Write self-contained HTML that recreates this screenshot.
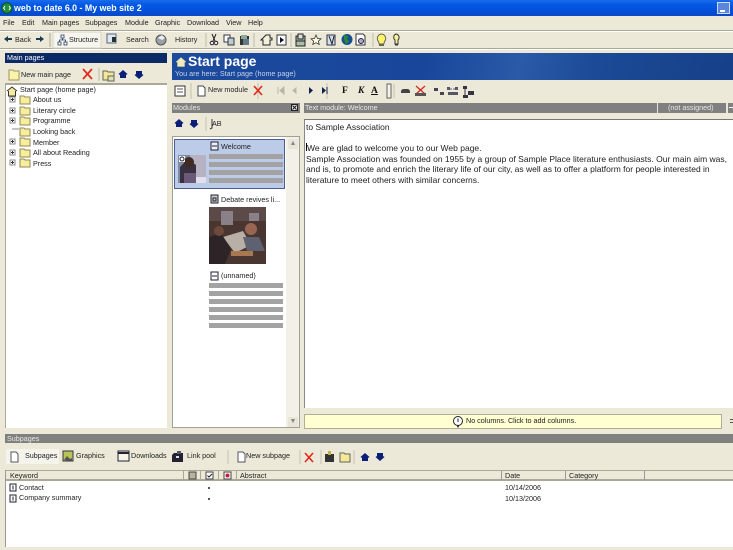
<!DOCTYPE html>
<html><head><meta charset="utf-8"><style>
html,body{margin:0;padding:0}
body{width:733px;height:550px;overflow:hidden;background:#ece9d8;position:relative}
#w{position:absolute;left:0;top:0;width:733px;height:550px;overflow:hidden;background:#ece9d8;font-family:"Liberation Sans",sans-serif;font-size:7.2px;color:#222;filter:blur(.3px)}
.a,.t,svg{position:absolute}
.t{white-space:nowrap;line-height:10px}
.g{background:#a3a3a3;position:absolute;height:5px}
</style></head><body><div id="w">
<div class="a" style="left:0;top:0;width:733px;height:16px;background:linear-gradient(#1a6cec,#0458e4 30%,#0350d8 70%,#0a48c8)"></div>
<svg style="left:1px;top:2px" width="12" height="12"><circle cx="6" cy="6" r="5.2" fill="#1f8f3a" stroke="#0c4d2a"/><path d="M4 4 2.600 6 4 8M8 4l1.400 2L8 8" stroke="#fff" fill="none"/></svg>
<div class="t" style="left:14px;top:3px;color:#fff;font-weight:bold;font-size:8.8px">web to date 6.0 - My web site 2</div>
<div class="a" style="left:717px;top:2px;width:13px;height:12px;background:#5a86e0;border:1px solid #d0dcf5;box-sizing:border-box"></div>
<div class="a" style="left:720px;top:10px;width:5px;height:2px;background:#fff"></div>
<div class="t" style="left:3px;top:18px">File</div><div class="t" style="left:22px;top:18px">Edit</div><div class="t" style="left:42px;top:18px">Main pages</div><div class="t" style="left:85px;top:18px">Subpages</div><div class="t" style="left:125px;top:18px">Module</div><div class="t" style="left:155px;top:18px">Graphic</div><div class="t" style="left:187px;top:18px">Download</div><div class="t" style="left:226px;top:18px">View</div><div class="t" style="left:248px;top:18px">Help</div>
<div class="a" style="left:0;top:30px;width:733px;height:1px;background:#aaa897"></div>
<div class="a" style="left:0;top:31px;width:733px;height:1px;background:#fff"></div>
<div class="a" style="left:0;top:48px;width:733px;height:1px;background:#aca899"></div>
<div class="a" style="left:0;top:49px;width:733px;height:1px;background:#fff"></div>
<svg style="left:0;top:31px" width="420" height="18">
<path d="M4 8 8 5v2h4v2H8v2zM44 8l-4-3v2h-4v2h4v2z" fill="#1b3a57"/>
<path d="M50 2v14" stroke="#aca899"/>
<rect x="53" y="1" width="48" height="16" fill="#f6f5ee" stroke="#d8d5c5"/>
<path d="M61 4h3v3h-3zM58 11h3v3h-3zM64 11h3v3h-3zM62.500 7v2M59.500 11V9h6v2" fill="#fff" stroke="#1d3a60" stroke-width=".8"/>
<rect x="107" y="3" width="9" height="9" fill="#dfe7f2" stroke="#56677f"/><path d="M112 6h4v5h-4z" fill="#233"/>
<circle cx="161" cy="9" r="5" fill="#9aa0a8" stroke="#555"/><path d="M158 7l4-3 3 3-3 2z" fill="#eee"/>
<path d="M206 2v14M254 2v14M291 2v14M373 2v14" stroke="#bdbaa8"/>
<path d="M212 3l3 7M216 3l-3 7" stroke="#222"/><circle cx="212" cy="12" r="1.800" fill="none" stroke="#223"/><circle cx="216" cy="12" r="1.800" fill="none" stroke="#223"/>
<rect x="224" y="4" width="6" height="7" fill="#fff" stroke="#334"/><rect x="228" y="7" width="6" height="7" fill="#bcc" stroke="#334"/>
<rect x="240" y="5" width="9" height="9" fill="#333"/><path d="M241 4h6v4h-6z" fill="#8a9"/><path d="M243 8h6v6h-6z" fill="#678"/>
<path d="M261 9l5-5h4v3h2v2h-2v5h-7V9z" fill="#f5f1d8" stroke="#223"/>
<rect x="277" y="4" width="9" height="10" fill="#fff" stroke="#334"/><path d="M280 6l4 3-4 3z" fill="#112"/>
<path d="M296 5h9v10h-9z" fill="#a9c0a8" stroke="#222"/><path d="M298 3h5v5h-5z" fill="#ddd" stroke="#222"/><path d="M296 10h9" stroke="#222"/>
<path d="M316 4l1.500 3.500 3.500.3-2.600 2.300.8 3.400-3.200-1.800-3.200 1.800.8-3.400-2.600-2.300 3.500-.3z" fill="#fffbe0" stroke="#333" stroke-width=".8"/>
<rect x="327" y="4" width="8" height="10" fill="#d8e0e8" stroke="#334"/><path d="M329 5l3 8 2-8" stroke="#123" fill="none"/>
<circle cx="347" cy="8.500" r="5.500" fill="#16508e"/><path d="M344 4l4 1-1 3 2 3-3 2-2-5z" fill="#2a8a35"/>
<path d="M356 3h7l2 2v9h-9z" fill="#fff" stroke="#334"/><circle cx="361" cy="10" r="2.500" fill="#aac" stroke="#223"/>
<path d="M379 13h5v2h-5z" fill="#665"/><path d="M381.500 3a4.500 4.500 0 0 1 3 7.500l-.7 2.500h-4.600l-.7-2.500a4.500 4.500 0 0 1 3-7.500z" fill="#fff46a" stroke="#665"/>
<path d="M396 3a3.500 3.500 0 0 1 2 6v4h-3V9a3.500 3.500 0 0 1 1-6z" fill="#f7f29b" stroke="#333"/><path d="M395 14h3" stroke="#333"/>
</svg>
<div class="t" style="left:15px;top:35px">Back</div><div class="t" style="left:69px;top:35px">Structure</div><div class="t" style="left:126px;top:35px">Search</div><div class="t" style="left:175px;top:35px">History</div>

<!-- left panel -->
<div class="a" style="left:5px;top:53px;width:162px;height:10px;background:#0c2a66"></div>
<div class="t" style="left:7px;top:53px;color:#fff">Main pages</div>
<svg style="left:5px;top:65px" width="140" height="18">
<path d="M4 5h4l1 1h5v9H4z" fill="#fbf3a8" stroke="#9a9464"/>
<path d="M78 4l9 10M87 4l-9 10" stroke="#e0281c" stroke-width="1.700"/>
<path d="M94 3v13" stroke="#bdbaa8"/>
<path d="M98 6h4l1 1h6v8H98z" fill="#f3e79a" stroke="#665"/><path d="M103 11h6v5h-6z" fill="#dbe0b0" stroke="#665"/>
<path d="M118 5l4.500 4-1.500 1v3h-6v-3l-1.500-1zM134 14l-4.500-4 1.500-1V6h6v3l1.500 1z" fill="#0c1f78"/>
</svg>
<div class="t" style="left:21px;top:70px">New main page</div>
<div class="a" style="left:5px;top:83px;width:162px;height:345px;background:#fff;border-top:2px solid #aca899;border-left:1px solid #aca899;box-sizing:border-box"></div>
<svg style="left:5px;top:85px" width="70" height="85">
<path d="M2 6l5-4 5 4M3.500 6v5h7V6" fill="#f6e9a0" stroke="#333"/>
<g fill="none" stroke="#888"><rect x="5" y="12" width="5" height="5" fill="#fff"/><rect x="5" y="23" width="5" height="5" fill="#fff"/><rect x="5" y="33" width="5" height="5" fill="#fff"/><path d="M7 44h7"/><rect x="5" y="54" width="5" height="5" fill="#fff"/><rect x="5" y="65" width="5" height="5" fill="#fff"/><rect x="5" y="75" width="5" height="5" fill="#fff"/></g>
<path d="M6 14.500h3M7.500 13v3M6 25.500h3M7.500 24v3M6 35.500h3M7.500 34v3M6 56.500h3M7.500 55v3M6 67.500h3M7.500 66v3M6 77.500h3M7.500 76v3" stroke="#333"/>
<g fill="#f7ed9c" stroke="#8f8a55"><path d="M15 11h4l1 1h5v7H15z"/><path d="M15 22h4l1 1h5v7H15z"/><path d="M15 32h4l1 1h5v7H15z"/><path d="M15 43h4l1 1h5v7H15z"/><path d="M15 53h4l1 1h5v7H15z"/><path d="M15 64h4l1 1h5v7H15z"/><path d="M15 74h4l1 1h5v7H15z"/></g>
</svg>
<div class="t" style="left:20px;top:85px">Start page (home page)</div>
<div class="t" style="left:33px;top:95px">About us</div>
<div class="t" style="left:33px;top:106px">Literary circle</div>
<div class="t" style="left:33px;top:116px">Programme</div>
<div class="t" style="left:33px;top:127px">Looking back</div>
<div class="t" style="left:33px;top:138px">Member</div>
<div class="t" style="left:33px;top:148px">All about Reading</div>
<div class="t" style="left:33px;top:159px">Press</div>

<!-- header -->
<div class="a" style="left:172px;top:53px;width:561px;height:27px;background:linear-gradient(100deg,#1c4a9c 0%,#19469a 45%,#2a5aa8 62%,#1c4a96 75%,#164088 100%)"></div>
<svg style="left:175px;top:56px" width="12" height="12"><path d="M1 6l5-4.500L11 6H9.500v4.500h-7V6z" fill="#f0e9c0" stroke="#e8d880" stroke-width=".5"/></svg>
<div class="t" style="left:188px;top:53px;color:#fff;font-weight:bold;font-size:14px;line-height:16px">Start page</div>
<div class="t" style="left:175px;top:69px;color:#c4d2ea">You are here: Start page (home page)</div>

<!-- module toolbar -->
<svg style="left:172px;top:81px" width="320" height="20">
<rect x="3" y="5" width="10" height="10" fill="#fff" stroke="#333"/><path d="M5 8h6M5 11h6" stroke="#555"/>
<path d="M19 2v16M86 2v16M155 2v16M216 2v16" stroke="#c4c1af"/>
<path d="M26 5h5l2 2v8h-7z" fill="#fff" stroke="#445"/>
<path d="M82 5l8 9M90 5l-8 9" stroke="#e0281c" stroke-width="1.600"/>
<path d="M106 6v7M112 6l-4 3.500 4 3.500zM124 7l-3 2.500 3 2.500z" fill="#b8b6a8" stroke="#b8b6a8"/>
<path d="M137 6l4 3.500-4 3.500zM150 6l4 3.500-4 3.500z" fill="#10204e"/><path d="M155 6v7" stroke="#10204e"/>
<rect x="215" y="3" width="4" height="14" fill="#f5f3e5" stroke="#666"/>
<path d="M222 3v14" stroke="#c4c1af"/>
<path d="M229 10a3 3 0 0 1 3-2h4a3 3 0 0 1 2 3v1h-9z" fill="#444"/>
<path d="M244 5l9 8M253 5l-9 8" stroke="#d8281c" stroke-width="1.300"/><path d="M243 12h11v3h-11z" fill="#555"/>
<path d="M262 7h4v3h-4zM268 11h4v3h-4z" fill="#445"/>
<path d="M275 6h3v3h-3zM283 6h3v3h-3zM276 11h10v3h-10z" fill="#556"/><path d="M275 8h11" stroke="#667" stroke-dasharray="2 1"/>
<path d="M291 5h4v3h-4zM296 10h6v4h-6zM291 14h5v3h-5z" fill="#334"/><path d="M293 8v6" stroke="#334"/>
</svg>
<div class="t" style="left:208px;top:85px">New module</div>
<div class="t" style="left:342px;top:86px;font-family:'Liberation Serif',serif;font-weight:bold;font-size:9.5px;color:#111">F</div>
<div class="t" style="left:358px;top:86px;font-family:'Liberation Serif',serif;font-style:italic;font-weight:bold;font-size:9.5px;color:#111">K</div>
<div class="t" style="left:371px;top:86px;font-family:'Liberation Serif',serif;font-weight:bold;font-size:9.5px;color:#111;text-decoration:underline">A</div>

<!-- modules panel -->
<div class="a" style="left:172px;top:103px;width:128px;height:10px;background:#808080"></div>
<div class="t" style="left:173px;top:103px;color:#e8e8e0">Modules</div>
<div class="a" style="left:291px;top:104px;width:7px;height:7px;background:#eee;border:1px solid #222;box-sizing:border-box"></div>
<svg style="left:291px;top:104px" width="7" height="7"><path d="M1.500 1.500l4 4M5.500 1.500l-4 4" stroke="#111"/></svg>
<svg style="left:172px;top:116px" width="60" height="16">
<path d="M7 3l4.500 4-1.500 1v3H4V8L2.500 7zM22 12l-4.500-4 1.500-1V4h6v3l1.500 1z" fill="#0c1f78"/>
<path d="M34 1v14" stroke="#c4c1af"/>
<path d="M40 3v9l-2 1" stroke="#333" fill="none"/>
</svg>
<div class="t" style="left:212px;top:119px">AB</div>
<div class="a" style="left:172px;top:136px;width:128px;height:292px;background:#fff;border:1px solid #a0a098;box-sizing:border-box"></div>
<div class="a" style="left:286px;top:137px;width:13px;height:290px;background:#f3f1e7"></div>
<div class="a" style="left:288px;top:139px;width:10px;height:10px;background:#e8e6d8;text-align:center;line-height:9px;color:#888;font-size:7px">▲</div>
<div class="a" style="left:288px;top:417px;width:10px;height:10px;background:#e8e6d8;text-align:center;line-height:9px;color:#888;font-size:7px">▼</div>
<div class="a" style="left:174px;top:139px;width:111px;height:50px;background:#bccbe8;border:1px solid #4a5f8c;box-sizing:border-box"></div>
<svg style="left:210px;top:141px" width="10" height="10"><path d="M1 1h7v8H1zM2 5h5" fill="#eef" stroke="#223"/></svg>
<svg style="left:210px;top:194px" width="10" height="10"><path d="M1 1h7v8H1zM3 4h3v3H3z" fill="#ccc" stroke="#223"/></svg>
<svg style="left:210px;top:271px" width="10" height="10"><path d="M1 1h7v8H1zM2 5h5" fill="#fff" stroke="#223"/></svg>
<div class="t" style="left:221px;top:142px">Welcome</div>
<div class="t" style="left:221px;top:195px">Debate revives li...</div>
<div class="t" style="left:221px;top:271px">(unnamed)</div>
<svg style="left:178px;top:155px" width="28" height="28"><rect width="28" height="28" fill="#7c8aa8"/><path d="M12 0h16v28H12z" fill="#b7b2c2"/><path d="M2 28V12l8-8 8 6v18z" fill="#3a2f3e"/><circle cx="11" cy="7" r="5" fill="#3e2a20"/><path d="M6 18h12v10H6z" fill="#6a5a78"/><path d="M18 22h10v6H18z" fill="#e2e0ec"/><rect x="1" y="1" width="6" height="6" fill="#fff"/><circle cx="4" cy="4" r="2" fill="none" stroke="#222"/></svg>
<div class="g" style="left:209px;top:154px;width:74px"></div><div class="g" style="left:209px;top:162px;width:74px"></div><div class="g" style="left:209px;top:170px;width:74px"></div><div class="g" style="left:209px;top:178px;width:74px"></div>
<svg style="left:209px;top:207px" width="57" height="57"><rect width="57" height="57" fill="#4a3630"/><path d="M0 0h57v14H0z" fill="#5c4a48"/><path d="M12 4h12v14H12zM40 6h10v8H40z" fill="#8a8088"/><path d="M14 30l20-6 8 14-16 8z" fill="#b8b0a6"/><path d="M22 44h22v5H22z" fill="#a87850"/><circle cx="42" cy="22" r="6" fill="#9a6654"/><path d="M34 30h16l6 14H38z" fill="#5e6270"/><path d="M0 30l12-4 10 16-6 15H0z" fill="#2e2428"/><circle cx="10" cy="24" r="5" fill="#6e4a3c"/></svg>
<div class="g" style="left:209px;top:283px;width:74px"></div><div class="g" style="left:209px;top:291px;width:74px"></div><div class="g" style="left:209px;top:299px;width:74px"></div><div class="g" style="left:209px;top:307px;width:74px"></div><div class="g" style="left:209px;top:315px;width:74px"></div><div class="g" style="left:209px;top:323px;width:74px"></div>

<!-- text panel -->
<div class="a" style="left:304px;top:103px;width:429px;height:10px;background:#808080"></div>
<div class="t" style="left:305px;top:103px;color:#e8e8e0">Text module: Welcome</div>
<div class="a" style="left:657px;top:103px;width:1px;height:10px;background:#e8e6d8"></div>
<div class="a" style="left:726px;top:103px;width:2px;height:10px;background:#e8e6d8"></div>
<div class="t" style="left:668px;top:103px;color:#e8e8e0">(not assigned)</div>
<div class="a" style="left:729px;top:107px;width:4px;height:1px;background:#fff"></div>
<div class="a" style="left:304px;top:119px;width:429px;height:289px;background:#fff;border-top:1px solid #777;border-left:1px solid #888;box-sizing:border-box"></div>
<div class="a" style="left:306px;top:143px;width:1px;height:8px;background:#000"></div>
<div class="t" style="left:306px;top:122px;font-size:8.500px">to Sample Association</div>
<div class="t" style="left:307px;top:143px;font-size:8.500px">We are glad to welcome you to our Web page.</div>
<div class="t" style="left:306px;top:154px;font-size:8.500px">Sample Association was founded on 1955 by a group of Sample Place literature enthusiasts. Our main aim was,</div>
<div class="t" style="left:306px;top:164px;font-size:8.500px">and is, to promote and enrich the literary life of our city, as well as to offer a platform for people interested in</div>
<div class="t" style="left:306px;top:175px;font-size:8.500px">literature to meet others with similar concerns.</div>
<div class="a" style="left:304px;top:414px;width:418px;height:15px;background:#ffffd2;border:1px solid #b0ae98;box-sizing:border-box"></div>
<svg style="left:452px;top:415px" width="12" height="13"><circle cx="6" cy="6" r="4.500" fill="#fff" stroke="#223"/><path d="M6 3.500v3.500M5 10l1 2 1-2" stroke="#223" fill="none"/></svg>
<div class="t" style="left:466px;top:416px">No columns. Click to add columns.</div>
<div class="a" style="left:730px;top:419px;width:3px;height:1px;background:#555"></div><div class="a" style="left:730px;top:422px;width:3px;height:1px;background:#555"></div>

<!-- subpages -->
<div class="a" style="left:5px;top:434px;width:728px;height:9px;background:#808080"></div>
<div class="t" style="left:7px;top:434px;color:#e8e8e0">Subpages</div>
<div class="a" style="left:6px;top:449px;width:53px;height:15px;background:#f4f3ec"></div>
<svg style="left:0;top:448px" width="400" height="18">
<path d="M11 4h5l2 2v8h-7z" fill="#fff" stroke="#556"/>
<rect x="63" y="3" width="10" height="10" fill="#b8c45a" stroke="#334"/><path d="M64 12l3-4 3 3 2-1v3z" fill="#555"/>
<rect x="118" y="3" width="11" height="10" fill="#f6f4e8" stroke="#223"/><path d="M118 5h11" stroke="#223" stroke-width="2"/>
<path d="M174 5h9v9h-11V7z" fill="#223"/><path d="M176 8h3v2h-3z" fill="#dde"/><path d="M177 3h4v3h-4z" fill="#556"/>
<path d="M228 2v14M300 2v14M321 2v14M354 2v14" stroke="#c4c1af"/>
<path d="M238 4h5l2 2v8h-7z" fill="#fff" stroke="#556"/>
<path d="M305 5l8 9M313 5l-8 9" stroke="#e0281c" stroke-width="1.600"/>
<path d="M325 6h9v8h-9z" fill="#333"/><path d="M328 3h3v4h-3z" fill="#c8b040"/>
<path d="M340 5h4l1 1h5v8H340z" fill="#f3e79a" stroke="#665"/>
<path d="M365 5l4.500 4-1.500 1v3h-6v-3l-1.500-1zM380 13l-4.500-4 1.500-1V5h6v3l1.500 1z" fill="#0c1f78"/>
</svg>
<div class="t" style="left:25px;top:451px">Subpages</div><div class="t" style="left:76px;top:451px">Graphics</div><div class="t" style="left:131px;top:451px">Downloads</div><div class="t" style="left:187px;top:451px">Link pool</div><div class="t" style="left:246px;top:451px">New subpage</div>

<!-- list -->
<div class="a" style="left:5px;top:470px;width:728px;height:77px;background:#fff;border-left:1px solid #999;box-sizing:border-box"></div>
<div class="a" style="left:6px;top:470px;width:727px;height:11px;background:#ece9d8;border-top:1px solid #aca899;border-bottom:2px solid #aca899;box-sizing:border-box"></div>
<div class="t" style="left:10px;top:471px">Keyword</div><div class="t" style="left:240px;top:471px">Abstract</div><div class="t" style="left:505px;top:471px">Date</div><div class="t" style="left:569px;top:471px">Category</div>
<div class="a" style="left:183px;top:471px;width:1px;height:9px;background:#aca899"></div><div class="a" style="left:200px;top:471px;width:1px;height:9px;background:#aca899"></div><div class="a" style="left:218px;top:471px;width:1px;height:9px;background:#aca899"></div><div class="a" style="left:236px;top:471px;width:1px;height:9px;background:#aca899"></div><div class="a" style="left:501px;top:471px;width:1px;height:9px;background:#999"></div><div class="a" style="left:565px;top:471px;width:1px;height:9px;background:#999"></div><div class="a" style="left:644px;top:471px;width:1px;height:9px;background:#999"></div>
<svg style="left:188px;top:471px" width="48" height="10"><rect x="1" y="1" width="7" height="7" fill="#b8b49a" stroke="#444"/><rect x="18" y="1" width="7" height="7" fill="#fff" stroke="#444"/><path d="M19.500 4.500l1.500 1.500 3-3" stroke="#222" fill="none"/><rect x="36" y="1" width="7" height="7" fill="#fff" stroke="#444"/><circle cx="39.500" cy="4.500" r="2" fill="#c02040"/></svg>
<svg style="left:9px;top:483px" width="10" height="22"><rect x="1" y="1" width="6" height="7" fill="#fff" stroke="#223"/><path d="M4 2.500v4" stroke="#223"/><rect x="1" y="12" width="6" height="7" fill="#fff" stroke="#223"/><path d="M4 13.500v4" stroke="#223"/></svg>
<div class="t" style="left:19px;top:483px">Contact</div><div class="t" style="left:19px;top:493px">Company summary</div>
<div class="a" style="left:208px;top:487px;width:2px;height:2px;background:#222;border-radius:50%"></div><div class="a" style="left:208px;top:498px;width:2px;height:2px;background:#222;border-radius:50%"></div>
<div class="t" style="left:505px;top:483px">10/14/2006</div><div class="t" style="left:505px;top:494px">10/13/2006</div>
</div></body></html>
